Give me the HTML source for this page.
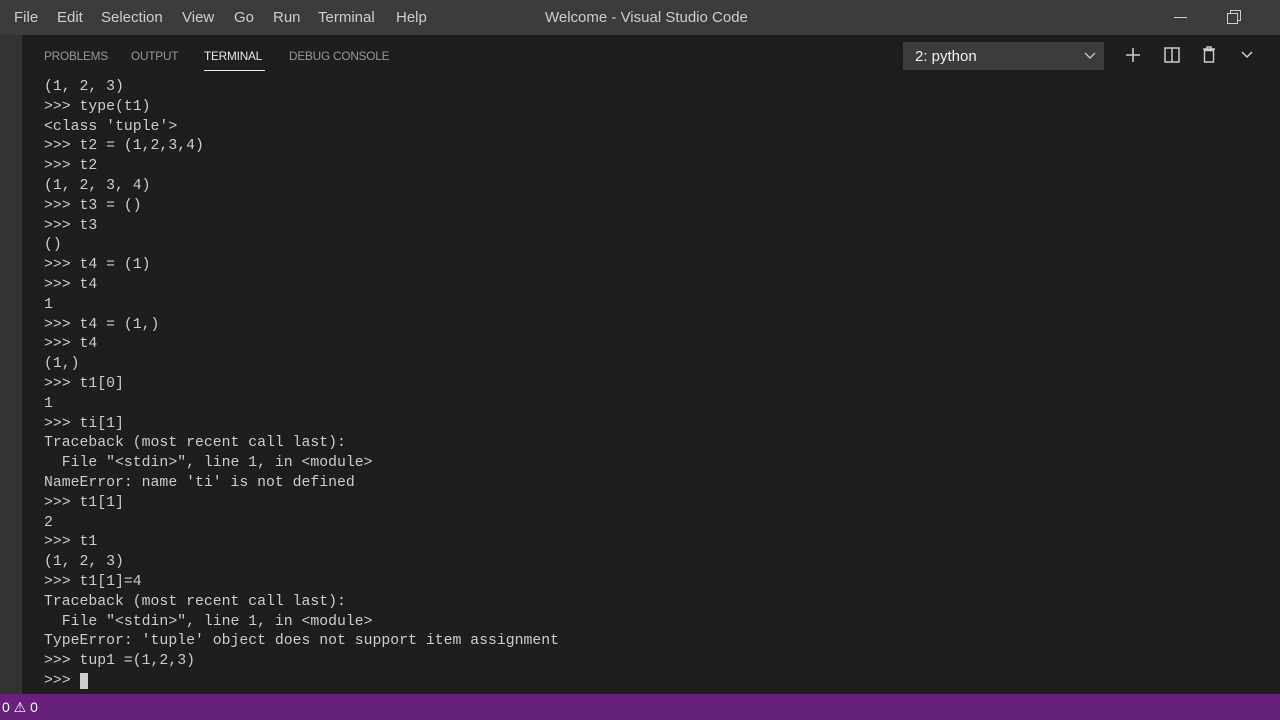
<!DOCTYPE html>
<html><head><style>
body{margin:0;width:1280px;height:720px;overflow:hidden;background:#1e1e1e;font-family:"Liberation Sans",sans-serif;position:relative}
.title{position:absolute;left:0;top:0;width:1280px;height:35px;background:#3c3c3c;color:#ccc;font-size:15px}
.title span{position:absolute;top:9px}
.act{position:absolute;left:0;top:35px;width:22px;height:659px;background:#333}
.panel{position:absolute;left:22px;top:35px;width:1258px;height:659px;background:#1e1e1e}
.tab{position:absolute;top:14px;font-size:11.8px;color:#969696;letter-spacing:-0.2px}
.term{position:absolute;left:44px;top:78px;font-family:"Liberation Mono",monospace;font-size:14.8px;line-height:19.8px;color:#ccc;white-space:pre;margin:0}
.status{position:absolute;left:0;top:694px;width:1280px;height:26px;background:#68217a;color:#fff;font-size:14px}
</style></head><body>
<div class="title">
<span style="left:14px">File</span><span style="left:57px">Edit</span><span style="left:101px">Selection</span><span style="left:182px">View</span><span style="left:234px">Go</span><span style="left:273px">Run</span><span style="left:318px">Terminal</span><span style="left:396px">Help</span>
<span style="left:545px">Welcome - Visual Studio Code</span>
<div style="position:absolute;left:1174px;top:17px;width:13px;height:1px;background:#ccc"></div>
<div style="position:absolute;left:1230px;top:10px;width:9px;height:9px;border:1px solid #ccc"></div>
<div style="position:absolute;left:1227px;top:13px;width:9px;height:9px;border:1px solid #ccc;background:#3c3c3c"></div>
</div>
<div class="act"></div>
<div class="panel">
<span class="tab" style="left:22px">PROBLEMS</span>
<span class="tab" style="left:109px">OUTPUT</span>
<span class="tab" style="left:182px;color:#e7e7e7">TERMINAL</span>
<div style="position:absolute;left:182px;top:35px;width:61px;height:1px;background:#e7e7e7"></div>
<span class="tab" style="left:267px">DEBUG CONSOLE</span>
<div style="position:absolute;left:881px;top:7px;width:201px;height:28px;background:#3c3c3c;color:#f0f0f0;font-size:15px"><span style="position:absolute;left:12px;top:6px">2: python</span>
<svg style="position:absolute;left:181px;top:10px" width="12" height="8"><path d="M1 1l5 5 5-5" stroke="#ccc" fill="none" stroke-width="1.3"/></svg></div>
<svg style="position:absolute;left:1103px;top:12px" width="16" height="16"><path d="M8 1v14M1 8h14" stroke="#ccc" stroke-width="1.6"/></svg>
<svg style="position:absolute;left:1142px;top:12px" width="16" height="16"><rect x="1" y="1" width="14" height="14" fill="none" stroke="#ccc" stroke-width="1.5"/><path d="M8 1v14" stroke="#ccc" stroke-width="1.5"/></svg>
<svg style="position:absolute;left:1180px;top:11px" width="14" height="17"><path d="M1 3h12M5 3V1h4v2M2.5 4.5h9V16h-9z" stroke="#ccc" fill="none" stroke-width="1.4"/></svg>
<svg style="position:absolute;left:1219px;top:16px" width="12" height="8"><path d="M1 1l5 5 5-5" stroke="#ccc" fill="none" stroke-width="1.5"/></svg>
</div>
<pre class="term">(1, 2, 3)
&gt;&gt;&gt; type(t1)
&lt;class 'tuple'&gt;
&gt;&gt;&gt; t2 = (1,2,3,4)
&gt;&gt;&gt; t2
(1, 2, 3, 4)
&gt;&gt;&gt; t3 = ()
&gt;&gt;&gt; t3
()
&gt;&gt;&gt; t4 = (1)
&gt;&gt;&gt; t4
1
&gt;&gt;&gt; t4 = (1,)
&gt;&gt;&gt; t4
(1,)
&gt;&gt;&gt; t1[0]
1
&gt;&gt;&gt; ti[1]
Traceback (most recent call last):
  File "&lt;stdin&gt;", line 1, in &lt;module&gt;
NameError: name 'ti' is not defined
&gt;&gt;&gt; t1[1]
2
&gt;&gt;&gt; t1
(1, 2, 3)
&gt;&gt;&gt; t1[1]=4
Traceback (most recent call last):
  File "&lt;stdin&gt;", line 1, in &lt;module&gt;
TypeError: 'tuple' object does not support item assignment
&gt;&gt;&gt; tup1 =(1,2,3)
&gt;&gt;&gt; <span style="background:#ccc"> </span></pre>
<div class="status"><span style="position:absolute;left:2px;top:5px">0 ⚠ 0</span></div>
</body></html>
